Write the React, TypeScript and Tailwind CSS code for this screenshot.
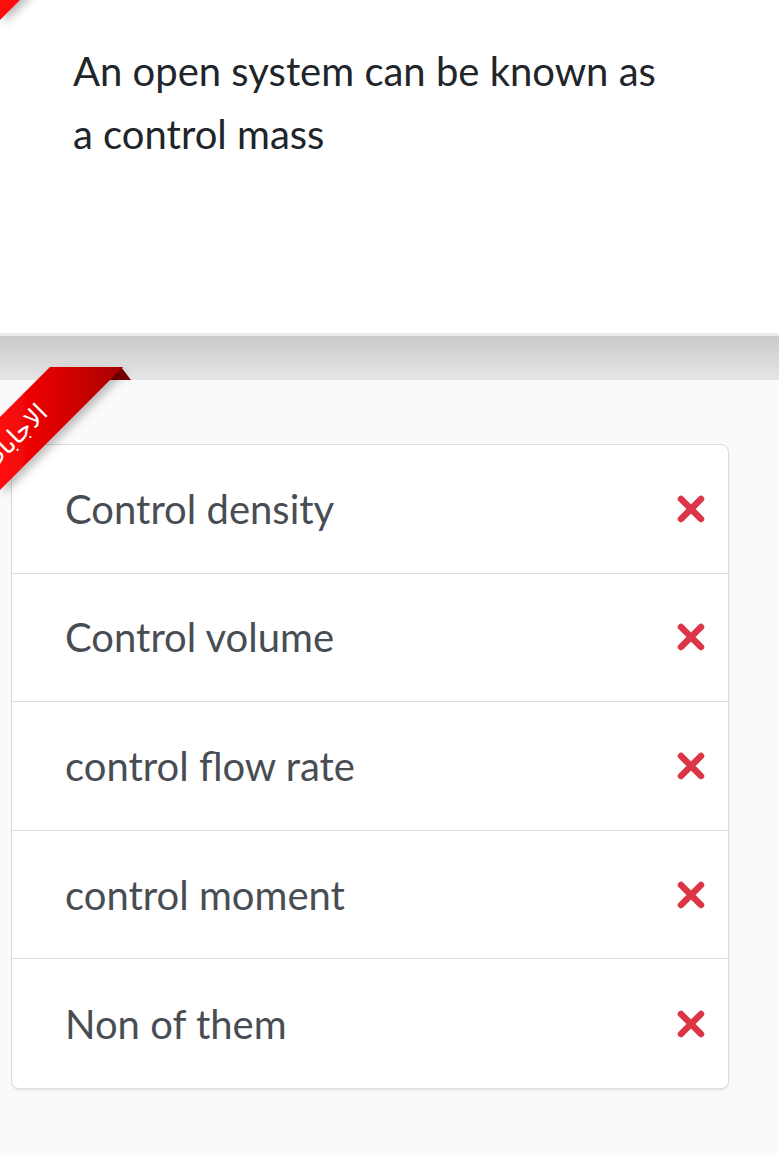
import React from "react";

function Ribbon({ className, withText }: { className: string; withText?: boolean }) {
  return (
    <div className={className}>
      <div className="relative h-[140px] w-[140px]">
        <svg
          className="absolute left-0 top-0"
          width="140"
          height="140"
          viewBox="0 0 140 140"
          style={{ overflow: "visible" }}
        >
          <defs>
            <linearGradient id="rg" x1="0" y1="0" x2="1" y2="0">
              <stop offset="0" stopColor="#ff0a0a" />
              <stop offset="0.55" stopColor="#d40000" />
              <stop offset="1" stopColor="#a30000" />
            </linearGradient>
            <filter id="rs" x="-30%" y="-30%" width="160%" height="160%">
              <feDropShadow dx="4" dy="4" stdDeviation="4" floodColor="#000" floodOpacity="0.25" />
            </filter>
          </defs>
          <polygon points="111,0 121,0 131,13 104,13" fill="#7a0000" />
          <polygon points="50,0 123,0 0,123 0,50" fill="url(#rg)" filter="url(#rs)" />
        </svg>
        {withText && (
          <span
            dir="rtl"
            className="absolute left-[-44px] top-[58px] w-[116px] text-center text-[25px] leading-[25px] text-white"
            style={{
              fontFamily: "'DejaVu Sans', sans-serif",
              transform: "rotate(-45deg)",
            }}
          >
            الاجابات
          </span>
        )}
      </div>
    </div>
  );
}

function XIcon() {
  return (
    <svg width="30" height="30" viewBox="0 0 30 30">
      <path
        d="M5 5 L25 25 M25 5 L5 25"
        stroke="#dc3545"
        strokeWidth="6.5"
        strokeLinecap="round"
      />
    </svg>
  );
}

const options = [
  "Control density",
  "Control volume",
  "control flow rate",
  "control moment",
  "Non of them",
];

export default function App() {
  return (
    <div
      className="relative flex w-[779px] h-[1153px] flex-col overflow-hidden bg-[#fafafa]"
      style={{ fontFamily: "Lato, 'Open Sans', sans-serif" }}
    >
      <div className="relative h-[333px] bg-white">
        <Ribbon className="absolute left-0 top-[-103px]" />
        <p className="w-[670px] pl-[73px] pt-[40px] text-[40px] leading-[63px] text-[#212529]">
          An open system can be known as a control mass
        </p>
      </div>
      <div className="h-[3px] bg-[#ececec]" />
      <div className="h-[44px] bg-gradient-to-b from-[#c9c9c9] to-[#e6e6e6]" />
      <div className="relative flex flex-col pl-[11px] pt-[64px]">
        <Ribbon className="absolute left-0 top-[-13px] z-10" withText />
        <div className="flex w-[718px] flex-col rounded-[8px] border border-[#dcdcdc] bg-white shadow-[0_2px_2px_rgba(0,0,0,0.06)]">
          {options.map((o, i) => (
            <div
              key={o}
              className={`flex h-[128.6px] items-center justify-between pl-[53px] pr-[22px] ${
                i < options.length - 1 ? "border-b border-[#dcdcdc]" : ""
              }`}
            >
              <span className="text-[40px] text-[#484d53]">{o}</span>
              <XIcon />
            </div>
          ))}
        </div>
      </div>
    </div>
  );
}
